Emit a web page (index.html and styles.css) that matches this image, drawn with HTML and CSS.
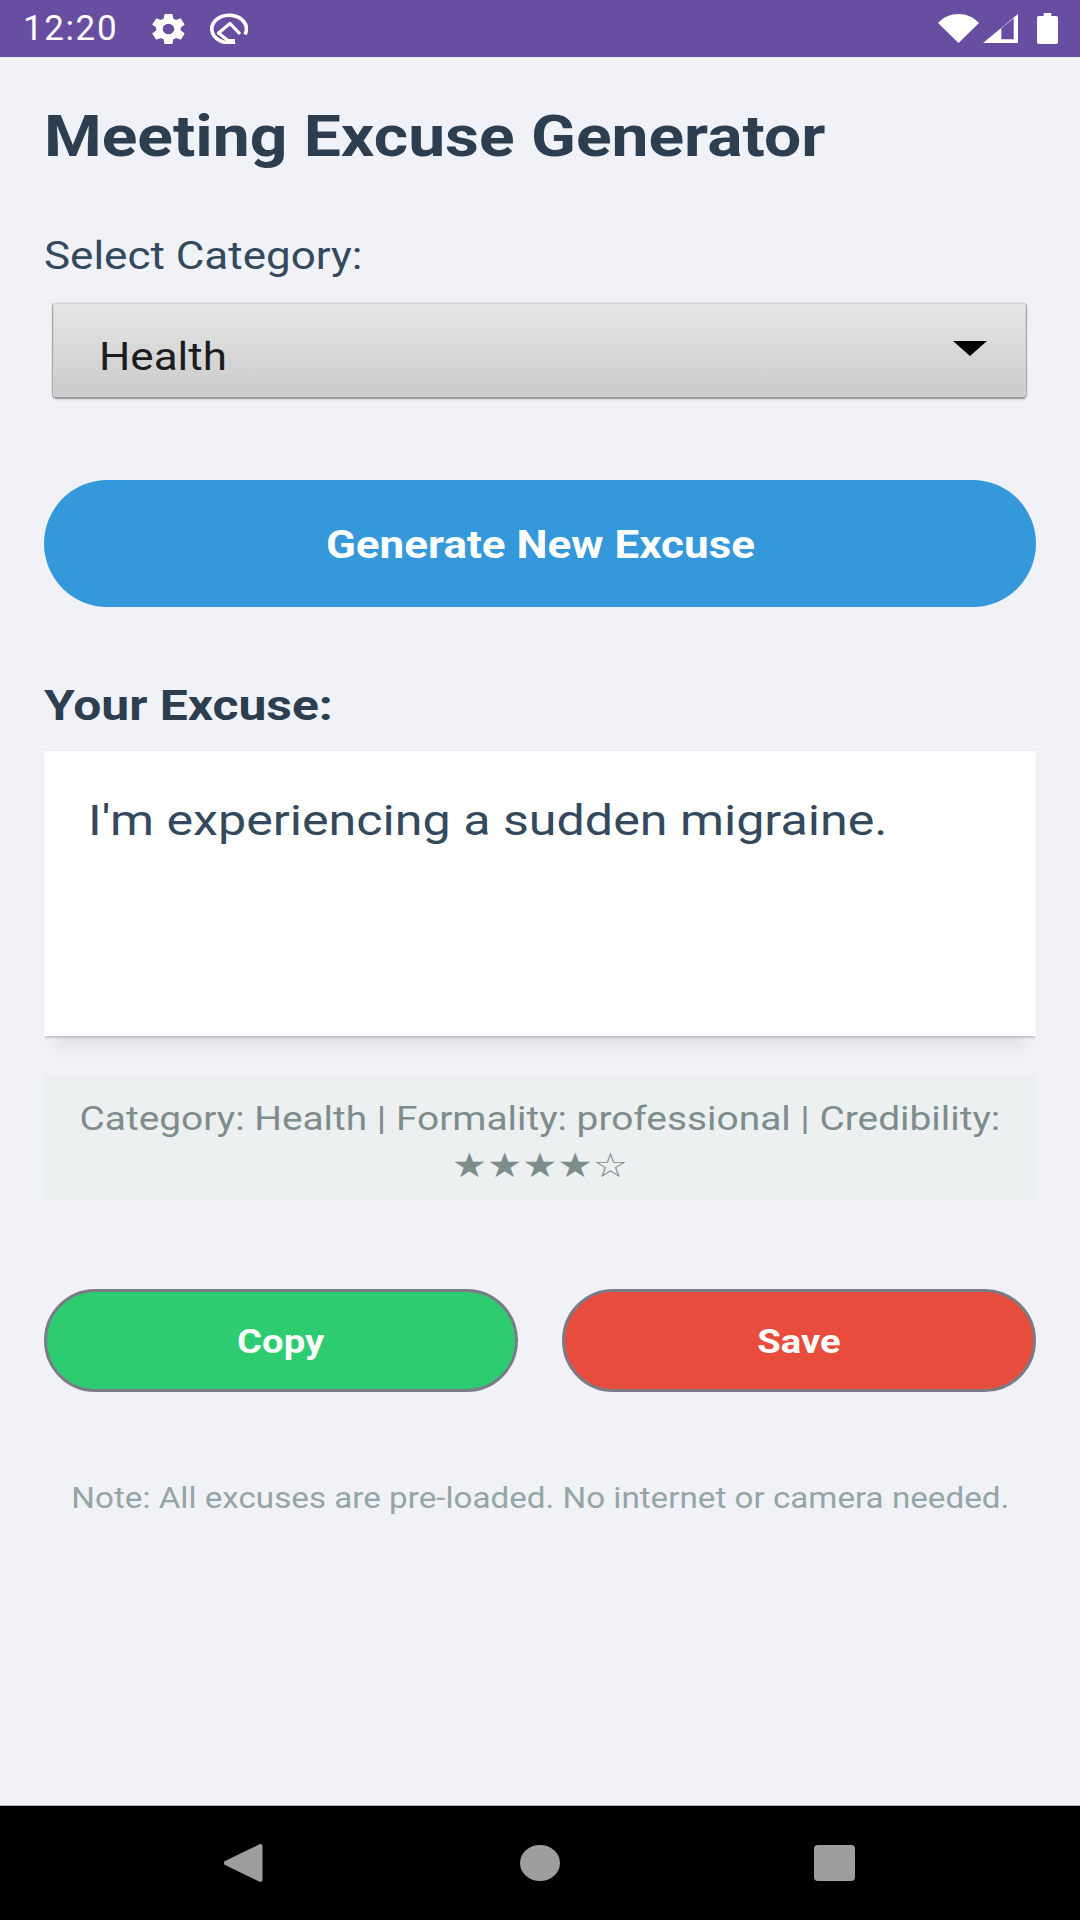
FILE: index.html
```html
<!DOCTYPE html>
<html lang="en">
<head>
  <meta charset="UTF-8">
  <meta name="viewport" content="width=device-width, initial-scale=1.0">
  <title>Meeting Excuse Generator</title>
  <link rel="stylesheet" href="styles.css">
</head>
<body>
  <div class="status-bar">
    <div class="status-left">
      <span class="clock">12:20</span>
      <svg class="icon-gear" viewBox="2 2 20 20" preserveAspectRatio="none"><path fill="#fff" d="M19.4 13c.04-.33.06-.66.06-1s-.02-.67-.06-1l2.1-1.65c.2-.15.25-.42.13-.64l-2-3.46c-.12-.22-.39-.3-.61-.22l-2.49 1c-.52-.4-1.08-.73-1.69-.98l-.38-2.65A.49.49 0 0 0 14 2h-4c-.25 0-.46.18-.49.42l-.38 2.65c-.61.25-1.17.59-1.69.98l-2.49-1a.5.5 0 0 0-.61.22l-2 3.46c-.13.22-.07.49.12.64L4.57 11c-.04.33-.07.67-.07 1s.03.67.07 1l-2.11 1.65c-.19.15-.24.42-.12.64l2 3.46c.12.22.39.3.61.22l2.49-1c.52.4 1.08.73 1.69.98l.38 2.65c.03.24.24.42.49.42h4c.25 0 .46-.18.49-.42l.38-2.65c.61-.25 1.17-.59 1.69-.98l2.49 1c.23.09.49 0 .61-.22l2-3.46c.12-.22.07-.49-.12-.64L19.4 13zM12 15.500A3.500 3.500 0 1 1 12 8.500a3.500 3.500 0 0 1 0 7z"/></svg>
      <svg class="icon-q" viewBox="0 0 38 31"><path fill="none" stroke="#fff" stroke-width="3.600" d="M25 29A17.300 13.800 0 1 1 35 21.500"/><path fill="none" stroke="#fff" stroke-width="3.200" stroke-linejoin="round" d="M30 21 20 10.500 8.500 20 18 27.500h7"/></svg>
    </div>
    <div class="status-right">
      <svg class="icon-wifi" viewBox="0 0 42 29" preserveAspectRatio="none"><path fill="#fff" d="M0 9C11-3 31-3 42 9L21 29z"/></svg>
      <svg class="icon-signal" viewBox="0 0 35 29"><path fill="#fff" fill-rule="evenodd" d="M35 0v29H0zM30.700 4.300 18.300 14.300v11h12.400z"/></svg>
      <svg class="icon-battery" viewBox="0 0 22 31" preserveAspectRatio="none"><path fill="#fff" d="M7 0h8v3h5a2 2 0 0 1 2 2v24a2 2 0 0 1-2 2H2a2 2 0 0 1-2-2V5a2 2 0 0 1 2-2h5z"/></svg>
    </div>
  </div>

  <div class="screen">
    <h1 class="title"><span class="wide wide-left">Meeting Excuse Generator</span></h1>
    <label class="field-label"><span class="wide wide-left">Select Category:</span></label>
    <div class="select">
      <span class="wide wide-left">Health</span>
      <span class="select-arrow"></span>
    </div>
    <button class="btn-generate"><span class="wide">Generate New Excuse</span></button>
    <h2 class="excuse-heading"><span class="wide wide-left">Your Excuse:</span></h2>
    <div class="excuse-card"><span class="wide wide-left">I'm experiencing a sudden migraine.</span></div>
    <div class="meta"><span class="wide">Category: Health | Formality: professional | Credibility:<br><span class="stars">★★★★☆</span></span></div>
    <div class="actions">
      <button class="btn-action btn-copy"><span class="wide">Copy</span></button>
      <button class="btn-action btn-save"><span class="wide">Save</span></button>
    </div>
    <p class="note"><span class="wide">Note: All excuses are pre-loaded. No internet or camera needed.</span></p>
  </div>

  <div class="nav-bar">
    <svg class="nav-back" viewBox="0 0 39 38"><path fill="#9e9e9e" d="M1 17 35 .500c2-1 3.500 0 3.500 2v33c0 2-1.500 3-3.500 2L1 21c-1.300-.7-1.300-3.300 0-4z"/></svg>
    <span class="nav-circle"></span>
    <span class="nav-square"></span>
  </div>
</body>
</html>
```

FILE: styles.css
```css
* { box-sizing: border-box; }
html, body { margin: 0; padding: 0; }
body { width: 1080px; height: 1920px; display: flex; flex-direction: column; font-family: Roboto, sans-serif; background: #f0f2f7; overflow: hidden; }

/* the app's text is rendered wider than plain Roboto */
.wide { display: inline-block; transform: scaleX(1.157); }
.wide-left { transform-origin: left center; }

.status-bar { height: 57px; background: #674ea0; display: flex; align-items: center; justify-content: space-between; padding: 0 22px 0 23px; color: #fff; }
.status-left, .status-right { display: flex; align-items: center; }
.clock { font-size: 35px; letter-spacing: 1.6px; width: 129px; }
.icon-gear { width: 33px; height: 30px; }
.icon-q { width: 38px; height: 31px; margin-left: 25px; }
.icon-wifi { width: 41px; height: 29px; }
.icon-signal { width: 35px; height: 29px; margin-left: 4px; }
.icon-battery { width: 21px; height: 31px; margin-left: 19px; }

.screen { flex: 1; padding: 0 44px; }
.title { margin: 48px 0 0; font-size: 57px; line-height: 64px; font-weight: 700; color: #2c3e50; }
.field-label { display: block; margin-top: 64px; font-size: 38px; line-height: 46px; color: #34495e; }

.select { margin: 24px 10px 0 9px; height: 94px; padding: 0 38px 0 45px; display: flex; align-items: center; justify-content: space-between; font-size: 38px; color: #1c1c1e; background: linear-gradient(#e6e6e6, #cbcbcb); border-radius: 3px; border: 1px solid #d4d4d4; box-shadow: 0 2px 2px #8e8e8e, 1px 0 1px #aaa, -1px 0 1px #aaa; }
.select .wide { margin-top: 14px; }
.select-arrow { width: 0; height: 0; border-left: 17px solid transparent; border-right: 17px solid transparent; border-top: 15px solid #000; margin-bottom: 4px; }

.btn-generate { display: block; width: 100%; height: 127px; margin-top: 83px; padding-top: 4px; border: none; border-radius: 64px; background: #3498db; color: #fff; font-family: inherit; font-size: 38px; font-weight: 700; }
.excuse-heading { margin: 74px 0 0; font-size: 43px; line-height: 48px; font-weight: 700; color: #2c3e50; }
.excuse-card { height: 285px; margin-top: 22px; padding: 43px 44px 0; background: #fff; font-size: 43.400px; line-height: 54px; color: #34495e; box-shadow: 0 3px 2px -1px rgba(0, 0, 0, 0.18), 0 24px 14px -10px rgba(0, 0, 0, 0.05), 0 -1px 2px rgba(0, 0, 0, 0.03); }

.meta { height: 126px; margin-top: 39px; padding-top: 21px; background: #ecf0f1; text-align: center; font-size: 33.600px; line-height: 46px; color: #7f8c8d; }
.stars { font-family: "DejaVu Sans", sans-serif; font-size: 34px; }

.actions { display: flex; gap: 44px; margin-top: 88px; }
.btn-action { flex: 1; height: 103px; padding: 2px 0 0; border: 3px solid #7b7b86; border-radius: 52px; color: #fff; font-family: inherit; font-size: 33px; font-weight: 700; }
.btn-copy { background: #2ecc71; }
.btn-save { background: #e74c3c; }

.note { margin: 88px 0 0; text-align: center; font-size: 28.700px; line-height: 36px; color: #95a5a6; }

.nav-bar { height: 115px; background: #000; border-top: 1px solid #aaa; display: flex; align-items: center; }
.nav-back { width: 39px; height: 38px; margin-left: 224px; }
.nav-circle { width: 40px; height: 36px; margin-left: 257px; border-radius: 50%; background: #9e9e9e; }
.nav-square { width: 41px; height: 36px; margin-left: 254px; border-radius: 4px; background: #9e9e9e; }
```
